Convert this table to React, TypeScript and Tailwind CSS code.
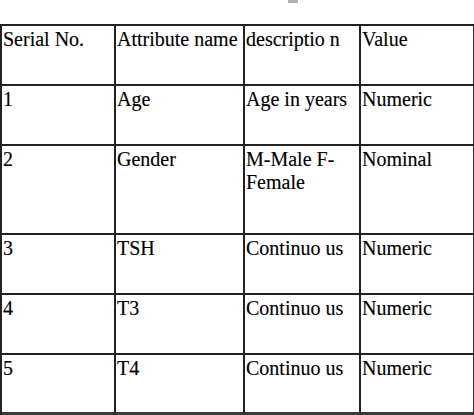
const rows: [string, string, React.ReactNode, string, string][] = [
  ['Serial No.', 'Attribute name', 'descriptio n', 'Value', 'h-[60px]'],
  ['1', 'Age', 'Age in years', 'Numeric', 'h-[60px]'],
  [
    '2',
    'Gender',
    <>
      M-Male F-
      <br />
      Female
    </>,
    'Nominal',
    'h-[89px]',
  ],
  ['3', 'TSH', 'Continuo us', 'Numeric', 'h-[60px]'],
  ['4', 'T3', 'Continuo us', 'Numeric', 'h-[60px]'],
  ['5', 'T4', 'Continuo us', 'Numeric', 'h-[60px]'],
]

export default function App() {
  return (
    <div className="w-[474px] h-[415px] bg-white text-black font-[family-name:'Liberation_Serif',serif] text-[20px] leading-[23px] [-webkit-text-stroke:0.15px_#000] overflow-hidden">
      {/* cut-off caption above the table */}
      <div className="h-[24px]">
        <div className="ml-[288px] w-[10px] h-[3px] bg-[#b0b0b0]" />
      </div>

      <div className="grid grid-cols-[114px_129px_116px_115px] border-t-2 border-l-2 border-[#222]">
        {rows.map(([serial, name, desc, value, h], i) => {
          const last = i === rows.length - 1
          const cell = `${h} pt-[2px] pl-[1px] border-r-2 ${last ? 'border-b-[3px] border-b-[#3a3a3a]' : 'border-b-2'} border-[#222]`
          return (
            <div key={i} className="contents">
              <div className={cell}>{serial}</div>
              <div className={cell}>{name}</div>
              <div className={cell}>{desc}</div>
              <div className={`${cell} border-r-[3px] border-r-[#333]`}>{value}</div>
            </div>
          )
        })}
      </div>
    </div>
  )
}
